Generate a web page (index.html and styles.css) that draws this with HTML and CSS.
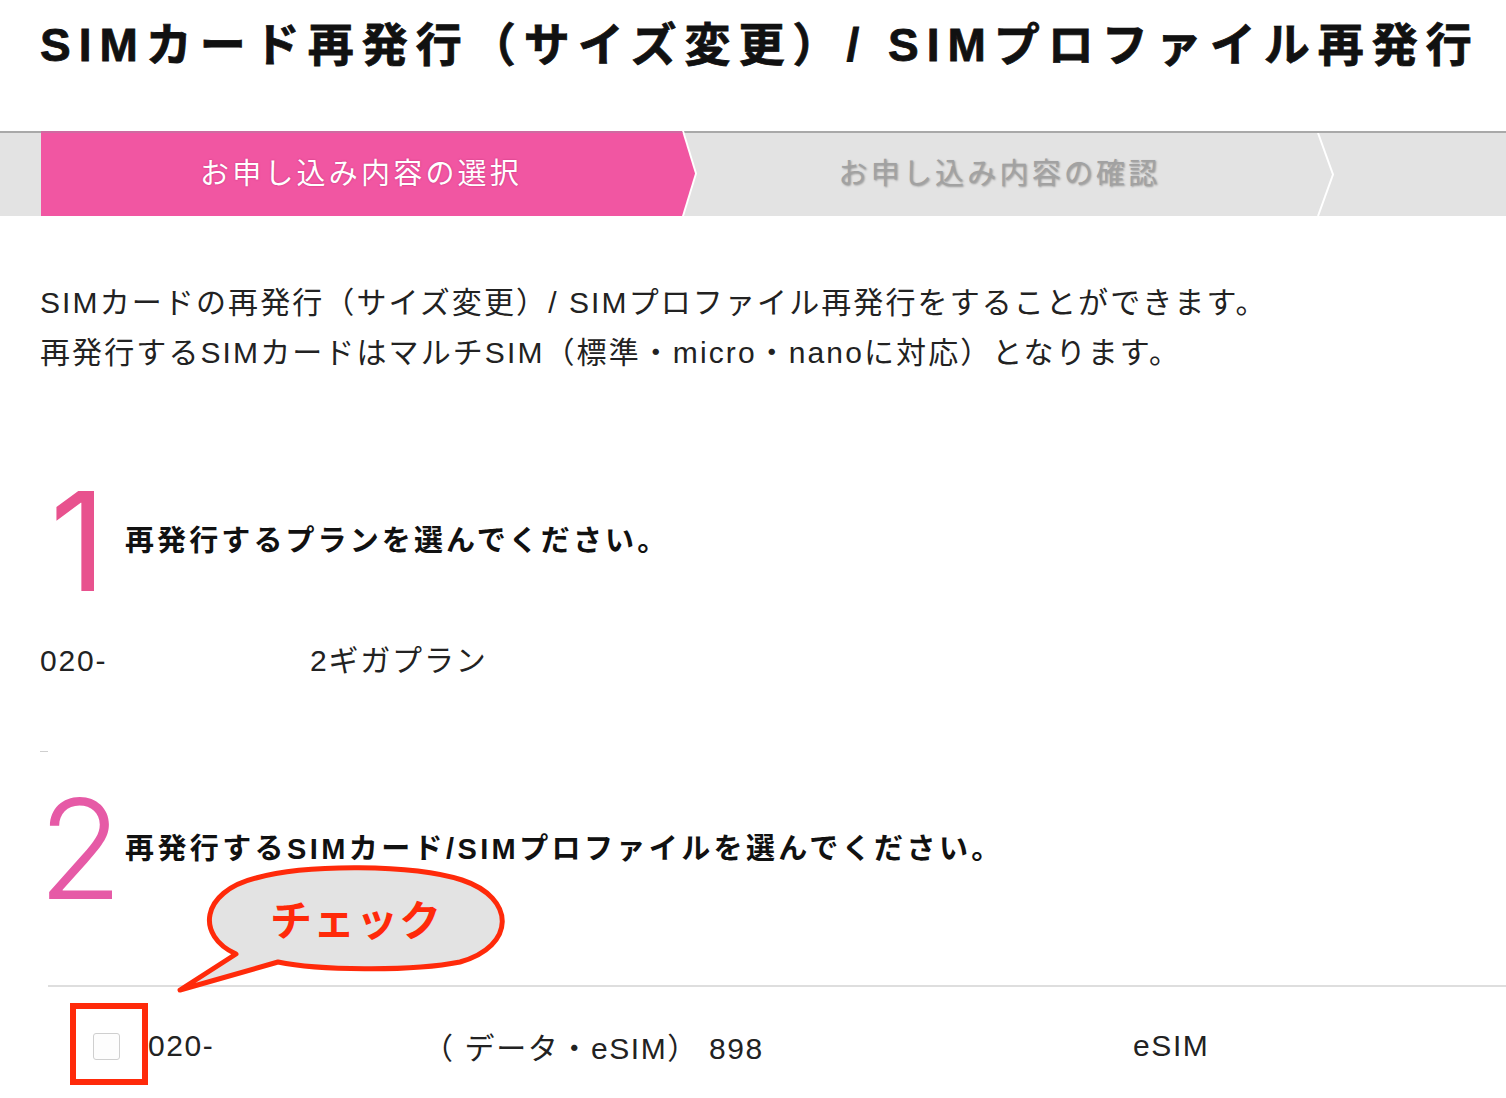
FILE: index.html
```html
<!DOCTYPE html>
<html lang="ja">
<head>
<meta charset="utf-8">
<title>SIMカード再発行</title>
<link rel="stylesheet" href="styles.css">
</head>
<body>
<div class="page">
  <h1 class="title">SIMカード再発行（サイズ変更）/ SIMプロファイル再発行</h1>

  <div class="steps">
    <div class="step-active-wrap">
      <div class="step-active"><span>お申し込み内容の選択</span></div>
    </div>
    <div class="step-next"><span>お申し込み内容の確認</span></div>
    <svg class="chevron" width="20" height="83" viewBox="0 0 20 83"><polyline points="2,0 17,41.5 2,83" fill="none" stroke="#ffffff" stroke-width="2"/></svg>
  </div>

  <p class="intro">SIMカードの再発行（サイズ変更）/ SIMプロファイル再発行をすることができます。<br>再発行するSIMカードはマルチSIM（標準・micro・nanoに対応）となります。</p>

  <section class="block block-1">
    <div class="block-head">
      <span class="num num-1">1</span>
      <h2 class="block-title">再発行するプランを選んでください。</h2>
    </div>
    <div class="plan-row">
      <span class="plan-no">020-</span>
      <span class="plan-name">2ギガプラン</span>
    </div>
    <div class="dash"></div>
  </section>

  <section class="block block-2">
    <div class="block-head">
      <span class="num num-2">2</span>
      <h2 class="block-title block-title-2">再発行するSIMカード/SIMプロファイルを選んでください。</h2>
    </div>
    <div class="sim-list">
      <div class="sim-row">
        <span class="check"></span>
        <span class="sim-no">020-</span>
        <span class="sim-type">（ データ・eSIM） 898</span>
        <span class="sim-kind">eSIM</span>
      </div>
    </div>
  </section>

  <svg class="bubble" width="340" height="130" viewBox="0 0 340 130">
    <path d="M60 88 C 20 70, 24 26, 80 12 C 130 -2, 236 -2, 286 14 C 340 32, 340 80, 284 96 C 234 106, 140 104, 102 96 L 4 124 Z" fill="#e3e3e3" stroke="#ff2a0a" stroke-width="5" stroke-linejoin="round"/>
    <text x="180" y="70" text-anchor="middle" class="bubble-text">チェック</text>
  </svg>
  <div class="check-mark"></div>
</div>
</body>
</html>
```
FILE: styles.css
```css
html, body {
  margin: 0;
  padding: 0;
  background: #ffffff;
}
body {
  font-family: "Liberation Sans", "Noto Sans CJK JP", sans-serif;
  color: #222;
  overflow: hidden;
}
.page {
  position: relative;
  width: 1506px;
  height: 1098px;
  overflow: hidden;
}
.title {
  margin: 0;
  padding: 14px 0 0 40px;
  height: 117px;
  box-sizing: border-box;
  font-size: 46px;
  font-weight: 700;
  letter-spacing: 8px;
  line-height: 62px;
  color: #111;
  white-space: nowrap;
  -webkit-text-stroke: 0.8px #111;
}
.steps {
  display: flex;
  height: 83px;
  border-top: 2px solid #a9a9a9;
  background: #e3e3e3;
  padding-left: 41px;
  margin-top: 14px;
}
.step-active-wrap {
  width: 656px;
  height: 85px;
  margin-top: -2px;
  background: #ffffff;
  clip-path: polygon(0 0, 643px 0, 656px 50%, 643px 100%, 0 100%);
  flex: none;
}
.step-active {
  width: 654px;
  height: 85px;
  box-sizing: border-box;
  border-top: 2px solid #cf6aa1;
  background: #f156a2;
  clip-path: polygon(0 0, 641px 0, 654px 50%, 641px 100%, 0 100%);
  display: flex;
  align-items: center;
  justify-content: center;
  padding-right: 14px;
}
.step-active span,
.step-next span {
  font-size: 29px;
  letter-spacing: 3.2px;
  line-height: 1;
  margin-top: 0;
}
.step-active span {
  color: #ffffff;
  text-shadow: 0 0 2px #c2307a;
}
.step-next {
  width: 619px;
  flex: none;
  display: flex;
  align-items: center;
  justify-content: center;
  padding-right: 14px;
  box-sizing: border-box;
}
.step-next span {
  color: #a2a2a2;
  text-shadow: 1px 1px 2px #9a9a9a;
}
.chevron {
  flex: none;
  display: block;
}
.intro {
  margin: 62px 0 0 40px;
  font-size: 30px;
  line-height: 50px;
  letter-spacing: 2.1px;
  color: #222;
  white-space: nowrap;
}
.block-head {
  display: flex;
  align-items: center;
  padding-left: 40px;
}
.num {
  width: 85px;
  flex: none;
  font-family: "Inter", "Liberation Sans", sans-serif;
  font-weight: 300;
  font-size: 138px;
  line-height: 110px;
  color: #e8528e;
}
.num-1 {
  text-indent: 10px;
  font-weight: 400;
}
.num-2 {
  color: #e65aa6;
  text-indent: -2px;
}
.block-title {
  margin: 0;
  font-size: 29px;
  font-weight: 700;
  letter-spacing: 3.1px;
  color: #111;
  line-height: 40px;
}
.block-title-2 {
  letter-spacing: 3.4px;
}
.block-1 {
  margin-top: 108px;
}
.plan-row {
  display: flex;
  margin: 45px 0 0 40px;
  font-size: 30px;
  line-height: 40px;
  letter-spacing: 1.8px;
}
.plan-no {
  width: 270px;
}
.dash {
  width: 8px;
  height: 1px;
  background: #cfcfcf;
  margin: 70px 0 0 40px;
}
.block-2 {
  margin-top: 42px;
}
.sim-list {
  margin: 81px 0 0 48px;
  border-top: 2px solid #dedede;
}
.sim-row {
  display: flex;
  align-items: center;
  height: 120px;
  padding-left: 45px;
  font-size: 30px;
  letter-spacing: 1.6px;
  padding-bottom: 2px;
  box-sizing: border-box;
}
.check {
  width: 25px;
  height: 25px;
  border: 1px solid #cfcfcf;
  border-radius: 3px;
  background: #fdfdfd;
  flex: none;
  margin-right: 28px;
}
.sim-no {
  width: 275px;
}
.sim-type {
  width: 710px;
}
.bubble {
  position: absolute;
  left: 176px;
  top: 866px;
  overflow: visible;
}
.bubble-text {
  font-family: "Noto Sans CJK JP", sans-serif;
  font-size: 42px;
  font-weight: 700;
  fill: #ff2a0a;
  letter-spacing: 1px;
}
.check-mark {
  position: absolute;
  left: 70px;
  top: 1003px;
  width: 78px;
  height: 82px;
  box-sizing: border-box;
  border: 6px solid #ff2a0a;
}
```
